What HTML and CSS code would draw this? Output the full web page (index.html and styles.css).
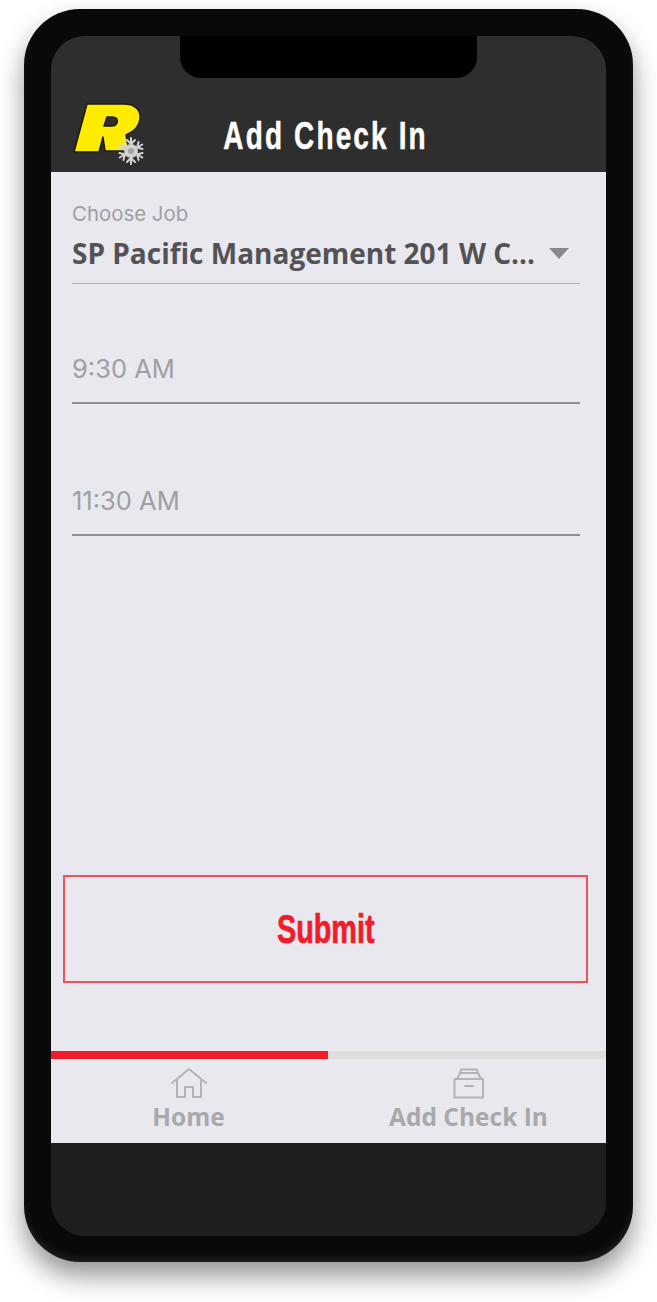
FILE: index.html
```html
<!DOCTYPE html>
<html lang="en">
<head>
  <meta charset="UTF-8">
  <title>Add Check In</title>
  <link rel="stylesheet" href="styles.css">
</head>
<body>

  <div class="phone">
    <div class="notch"></div>
    <div class="screen">

      <!-- Header -->
      <header class="top-bar">
        <svg class="logo" width="72" height="64" viewBox="0 0 72 64">
          <path d="M13 2 H50 C62 2 67 9 66 17 C65 25 59 30 52 33 L55 49 H31 L29 35 L25 50 H0 Z M33 15 L30 24 H38 C42 24 44 21 43 18 C43 15 40 15 37 15 Z" fill="#ffec00" fill-rule="evenodd" stroke="#1c1c10" stroke-width="1.5" stroke-linejoin="round"/>
          <g transform="translate(57 49)">
            <circle r="7" fill="#cfcfcf"/>
            <g stroke="#d4d4d4" stroke-width="2" stroke-linecap="round" fill="none">
              <path d="M0 -13 V13 M-4 -11 L0 -7 L4 -11 M-4 11 L0 7 L4 11"/>
              <path d="M0 -13 V13 M-4 -11 L0 -7 L4 -11 M-4 11 L0 7 L4 11" transform="rotate(60)"/>
              <path d="M0 -13 V13 M-4 -11 L0 -7 L4 -11 M-4 11 L0 7 L4 11" transform="rotate(120)"/>
            </g>
            <circle r="3" fill="#a3a3a3"/>
          </g>
        </svg>
        <h1 class="top-title">Add Check In</h1>
      </header>

      <!-- Form -->
      <main class="content">
        <div class="job-field">
          <label class="job-label">Choose Job</label>
          <div class="job-select">
            <span class="job-value">SP Pacific Management 201 W C...</span>
            <span class="job-arrow"></span>
          </div>
        </div>
        <div class="time-field">9:30 AM</div>
        <div class="time-field">11:30 AM</div>
        <button class="submit-btn" type="button"><span class="submit-text">Submit</span></button>
      </main>

      <!-- Tabs -->
      <nav class="tabs">
        <div class="tab-progress"><div class="tab-progress-fill"></div></div>
        <div class="tab-row">
          <div class="tab">
            <svg width="36" height="31" viewBox="0 0 36 31" fill="none" stroke="#b4b4b6" stroke-width="2" stroke-linejoin="round" stroke-linecap="round">
              <path d="M1 15 L18 1 L35 15"/>
              <path d="M6 12 V29 H14 V19 H22 V29 H30 V12"/>
            </svg>
            <span class="tab-label">Home</span>
          </div>
          <div class="tab">
            <svg width="32" height="31" viewBox="0 0 32 31" fill="none" stroke="#b4b4b6" stroke-width="2" stroke-linejoin="round" stroke-linecap="round">
              <path d="M1.500 11 H30 V29.500 H1.500 Z"/>
              <path d="M4 11 L7 5 H25 L28 11"/>
              <path d="M8 1.500 H24 L25 5 H7 Z"/>
              <path d="M12 18 H20"/>
            </svg>
            <span class="tab-label">Add Check In</span>
          </div>
        </div>
      </nav>

      <div class="home-area"></div>
    </div>
  </div>

</body>
</html>
```

FILE: styles.css
```css
* {
  box-sizing: border-box;
}

body {
  margin: 0;
  padding: 9px 0 40px 24px;
  background-color: #fff;
  font-family: "Open Sans", sans-serif;
}

.phone {
  position: relative;
  width: 609px;
  height: 1253px;
  padding: 27px;
  background-color: #090909;
  border-radius: 56px;
  box-shadow: 0 14px 26px rgba(0, 0, 0, 0.42), inset 0 -5px 6px rgba(255, 255, 255, 0.08);
}

.notch {
  position: absolute;
  z-index: 1;
  top: 27px;
  left: 156px;
  width: 297px;
  height: 42px;
  background-color: #000;
  border-radius: 0 0 21px 21px;
}

.screen {
  display: flex;
  flex-direction: column;
  height: 1200px;
  border-radius: 34px;
  overflow: hidden;
  background-color: #1e1e1e;
}

.top-bar {
  position: relative;
  display: flex;
  align-items: center;
  justify-content: center;
  height: 136px;
  padding: 63px 5px 0 0;
  background-color: #2e2e2e;
}

.logo {
  position: absolute;
  left: 23px;
  top: 66px;
}

/* no condensed family installed, so the wide bold is squeezed */
.top-title {
  margin: 0;
  color: #fff;
  font-family: "Liberation Sans", sans-serif;
  font-size: 39px;
  font-weight: 700;
  letter-spacing: 3px;
  white-space: nowrap;
  -webkit-text-stroke: 0.5px #fff;
  transform: scaleX(0.717);
}

.content {
  display: flex;
  flex-direction: column;
  flex: 1;
  padding: 30px 26px 0 21px;
  background-color: #e9e8ef;
}

.job-label {
  display: block;
  color: #9f9fa3;
  font-family: Inter, sans-serif;
  font-size: 20.4px;
  line-height: 24px;
}

.job-select {
  display: flex;
  align-items: center;
  justify-content: space-between;
  height: 58px;
  padding: 0 11px 3px 0;
  border-bottom: 1px solid #b0b0b3;
}

.job-value {
  color: #535356;
  font-size: 28px;
  font-weight: 700;
  white-space: nowrap;
}

.job-arrow {
  width: 0;
  height: 0;
  border-left: 10px solid transparent;
  border-right: 10px solid transparent;
  border-top: 11px solid #89898c;
}

.time-field {
  display: flex;
  align-items: center;
  height: 60px;
  margin-top: 60px;
  padding-bottom: 9px;
  color: #9f9fa3;
  font-family: Inter, sans-serif;
  font-size: 25.5px;
  border-bottom: 2px solid #8f8f92;
}

.time-field + .time-field {
  margin-top: 72px;
}

.submit-btn {
  height: 108px;
  margin: auto -8px 68px -9px;
  background: none;
  border: 2px solid #f2505c;
  color: #f01c2a;
  font-family: "Liberation Sans", sans-serif;
  font-size: 40px;
  font-weight: 700;
}

.submit-text {
  display: inline-block;
  -webkit-text-stroke: 0.7px #f01c2a;
  transform: scaleX(0.72);
}

.tabs {
  background-color: #e9e8ef;
}

.tab-progress {
  height: 8px;
  background-color: #dddddd;
}

.tab-progress-fill {
  width: 277px;
  height: 100%;
  background-color: #f01c2a;
}

.tab-row {
  display: flex;
  gap: 5px;
  height: 84px;
}

.tab {
  display: flex;
  flex: 1;
  flex-direction: column;
  align-items: center;
  padding-top: 9px;
}

.tab-label {
  margin-top: 2px;
  color: #a9a9ab;
  font-size: 24.5px;
  font-weight: 700;
  line-height: 32px;
}

.home-area {
  flex: none;
  height: 93px;
  background-color: #1e1e1e;
}
```
